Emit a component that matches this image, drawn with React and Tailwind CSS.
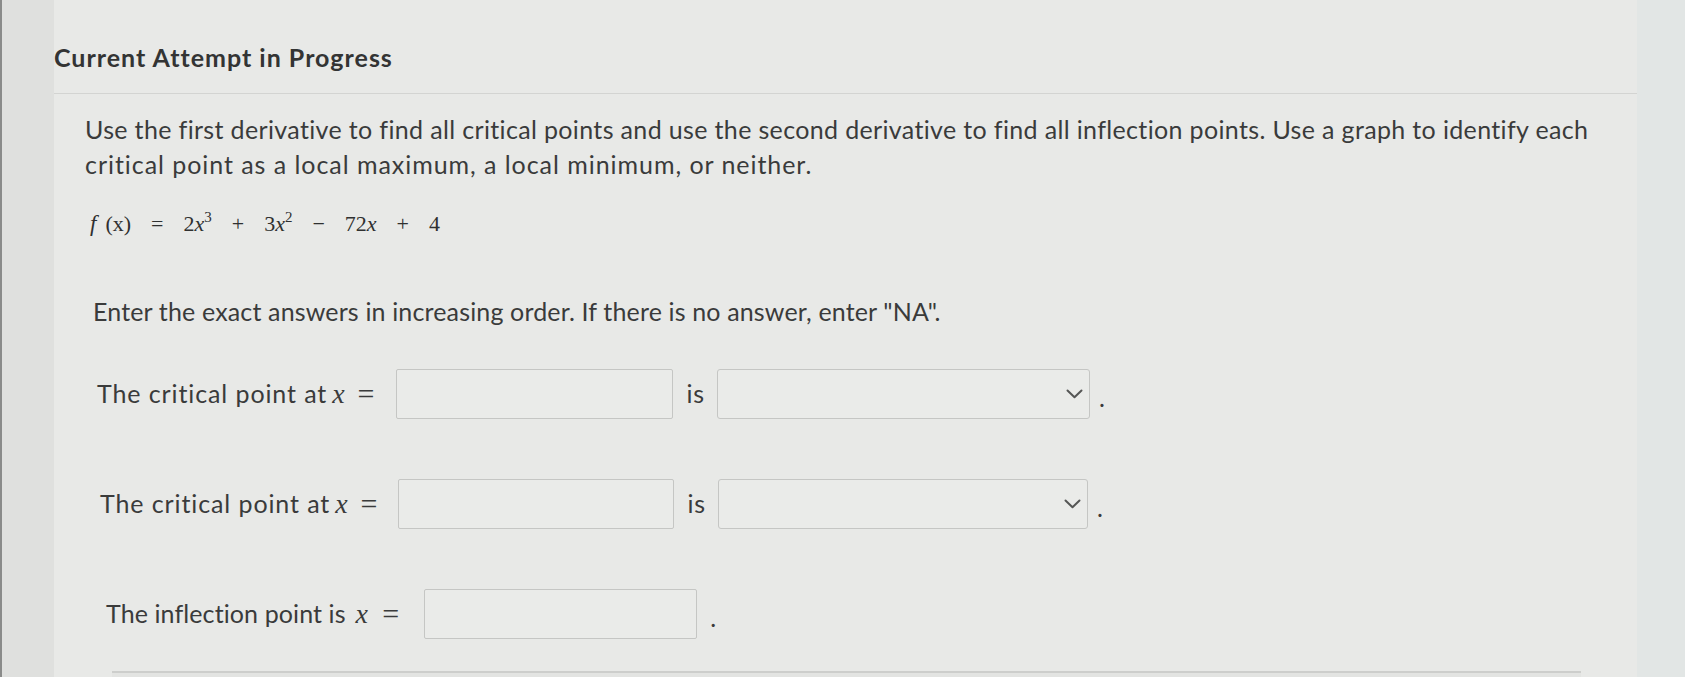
import React from "react";

const Eq = ({ cls = "" }) => (
  <span className={`font-['Liberation_Serif',serif] text-[30px] leading-none ${cls}`}>=</span>
);

const X = ({ cls = "ml-[4px]" }) => (
  <span className={`font-['Liberation_Serif',serif] italic text-[28px] leading-none ${cls}`}>x</span>
);

const Chevron = () => (
  <svg width="17" height="10" viewBox="0 0 17 10" fill="none" className="shrink-0">
    <path d="M1.5 1.5 L8.5 8.2 L15.5 1.5" stroke="#555655" strokeWidth="2" strokeLinecap="round" strokeLinejoin="round" />
  </svg>
);

const Input = ({ w }) => (
  <div className={`h-[50px] ${w} border-[1.5px] border-[#c5c6c4] bg-[#eaebe9] rounded-[2px] shrink-0`} />
);

const Select = ({ w }) => (
  <div className={`h-[50px] ${w} border-[1.5px] border-[#c5c6c4] bg-[#eaebe9] rounded-[3px] shrink-0 flex items-center justify-end pr-[6px]`}>
    <Chevron />
  </div>
);

export default function App() {
  return (
    <div className="w-[1685px] h-[677px] flex overflow-hidden bg-[#e8e9e7] text-[#3a3b3b] font-['Lato',sans-serif]">
      <div className="w-[2px] bg-[#8a8b8a] shrink-0" />
      <div className="w-[52px] bg-[#dfe0de] shrink-0" />
      <div className="flex-1 flex flex-col">
        <div className="pt-[41px] h-[73px]">
          <h1 className="text-[25px] leading-[32px] font-bold tracking-[1px] text-[#333434]">Current Attempt in Progress</h1>
        </div>
        <div className="mt-[20px] border-t border-[#d3d4d2]" />

        <p className="mt-[18px] pl-[31px] w-[1551px] text-[25px] leading-[35px] tracking-[0.35px]">
          Use the first derivative to find all critical points and use the second derivative to find all inflection points. Use a graph to identify each{" "}
          <span className="tracking-[0.95px]">critical point as a local maximum, a local minimum, or neither.</span>
        </p>

        <div className="mt-[28px] pl-[36px] h-[28px] leading-[28px] text-[22px] font-['Liberation_Serif',serif] text-[#2f3030] flex items-baseline whitespace-pre">
          <span className="italic text-[23px]">f</span>
          <span className="ml-[9px]">(x)</span>
          <span className="mx-[20px]">=</span>
          <span>2</span>
          <span className="italic">x</span>
          <span className="text-[15px] relative -top-[9px]">3</span>
          <span className="mx-[20px]">+</span>
          <span>3</span>
          <span className="italic">x</span>
          <span className="text-[15px] relative -top-[9px]">2</span>
          <span className="mx-[20px]">−</span>
          <span>72</span>
          <span className="italic">x</span>
          <span className="mx-[20px]">+</span>
          <span>4</span>
        </div>

        <p className="mt-[56px] pl-[39px] text-[25px] leading-[35px] tracking-[0.15px]">
          Enter the exact answers in increasing order. If there is no answer, enter "NA".
        </p>

        <div className="mt-[40px] pl-[43px] flex items-center text-[25px] tracking-[0.9px]">
          <span>The critical point at</span>
          <X cls="ml-[5px]" />
          <Eq cls="ml-[12px]" />
          <div className="ml-[21px]"><Input w="w-[277px]" /></div>
          <span className="ml-[13px]">is</span>
          <div className="ml-[12px]"><Select w="w-[373px]" /></div>
          <span className="ml-[9px] relative top-[4px]">.</span>
        </div>

        <div className="mt-[60px] pl-[46px] flex items-center text-[25px] tracking-[0.9px]">
          <span>The critical point at</span>
          <X cls="ml-[5px]" />
          <Eq cls="ml-[12px]" />
          <div className="ml-[20px]"><Input w="w-[276px]" /></div>
          <span className="ml-[13px]">is</span>
          <div className="ml-[12px]"><Select w="w-[370px]" /></div>
          <span className="ml-[9px] relative top-[4px]">.</span>
        </div>

        <div className="mt-[60px] pl-[52px] flex items-center text-[25px] tracking-[0.1px]">
          <span>The inflection point is</span>
          <X cls="ml-[10px]" />
          <Eq cls="ml-[14px]" />
          <div className="ml-[25px]"><Input w="w-[273px]" /></div>
          <span className="ml-[13px] relative top-[4px]">.</span>
        </div>

        <div className="mt-[32px] ml-[58px] w-[1469px] border-t-2 border-[#cdcecc] flex-1 bg-[#e3e4e2]" />
      </div>
      <div className="w-[48px] bg-[#e2e6e5] shrink-0" />
    </div>
  );
}
